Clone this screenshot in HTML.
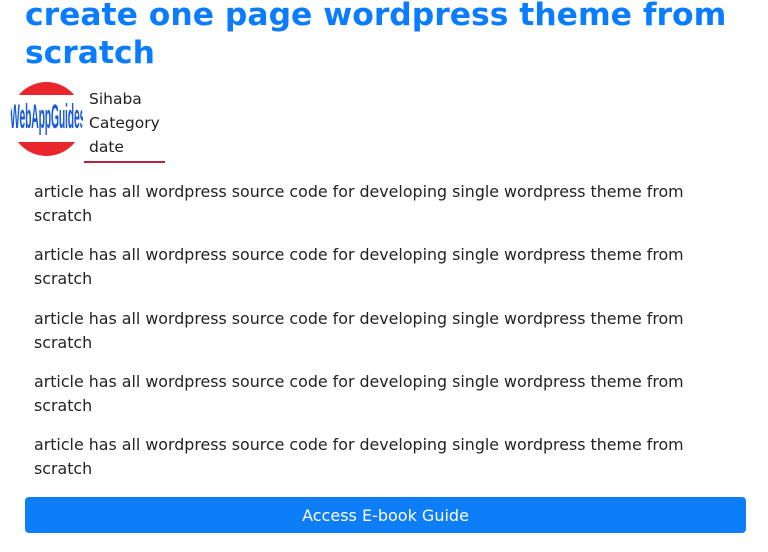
<!DOCTYPE html>
<html><head><style>
body{margin:0;width:768px;height:552px;overflow:hidden;background:#fff;font-family:"DejaVu Sans",sans-serif;color:#222;}
h1{position:absolute;left:25px;top:-4px;margin:0;font-family:"DejaVu Sans",sans-serif;font-weight:bold;font-size:31.4px;line-height:38px;color:#0a7cff;width:740px}
.logo{position:absolute;left:10px;top:82px;width:73px;height:74px;border-radius:50%;overflow:hidden;background:#fff}
.logo .r1{position:absolute;left:0;top:0;width:100%;height:13px;background:#e8262c}
.logo .r2{position:absolute;left:0;bottom:0;width:100%;height:14px;background:#e8262c}
.logo span{position:absolute;left:0px;top:16px;font-family:"Liberation Sans",sans-serif;font-weight:bold;font-size:34px;color:#1a5ad8;transform:scaleX(0.305);transform-origin:0 0;white-space:nowrap;letter-spacing:-0.5px}
.meta{position:absolute;left:89px;top:87px;font-size:15.5px;line-height:24px}
.line{position:absolute;left:84px;top:161px;width:81px;height:2px;background:#b5233f}
.p{position:absolute;left:34px;width:700px;font-size:15.85px;line-height:24px}
.btn{position:absolute;left:25px;top:497px;width:721px;height:36px;background:#0d7ef8;border-radius:4px;color:#fff;font-size:16px;line-height:37px;text-align:center}
</style></head><body>
<h1>create one page wordpress theme from scratch</h1>
<div class="logo"><div class="r1"></div><div class="r2"></div><span>WebAppGuides</span></div>
<div class="meta">Sihaba<br>Category<br>date</div>
<div class="line"></div>
<div class="p" style="top:180px">article has all wordpress source code for developing single wordpress theme from scratch</div>
<div class="p" style="top:243px">article has all wordpress source code for developing single wordpress theme from scratch</div>
<div class="p" style="top:307px">article has all wordpress source code for developing single wordpress theme from scratch</div>
<div class="p" style="top:370px">article has all wordpress source code for developing single wordpress theme from scratch</div>
<div class="p" style="top:433px">article has all wordpress source code for developing single wordpress theme from scratch</div>
<div class="btn">Access E-book Guide</div>
</body></html>
